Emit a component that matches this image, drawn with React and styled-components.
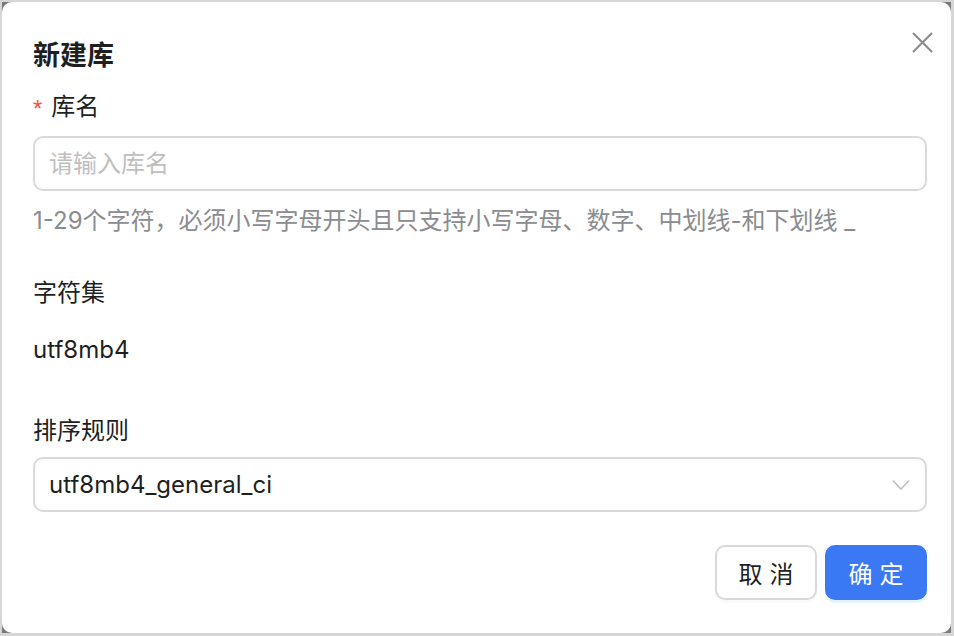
import React from "react";
import styled, { createGlobalStyle } from "styled-components";

const Global = createGlobalStyle`
  html, body { margin: 0; padding: 0; }
  body {
    font-family: Inter, "Noto Sans CJK SC", sans-serif;
    background: #d6d6d6;
  }
  * { box-sizing: border-box; }
`;

const Frame = styled.div`
  width: 954px;
  height: 636px;
  padding: 2px 3px 3px 2px;
  background: #d6d6d6;
`;

const Backdrop = styled.div`
  width: 100%;
  height: 100%;
  background: #7a7a7a;
`;

const Dialog = styled.div`
  position: relative;
  width: 100%;
  height: 100%;
  background: #ffffff;
  border-radius: 10px;
  padding: 37px 24px 33px 31px;
  display: flex;
  flex-direction: column;
`;

const Title = styled.div`
  font-size: 27px;
  line-height: 34px;
  font-weight: 700;
  color: #1f1f1f;
`;

const CloseButton = styled.button`
  position: absolute;
  top: 27px;
  right: 16px;
  width: 26px;
  height: 26px;
  padding: 0;
  border: none;
  background: transparent;
  display: flex;
  align-items: center;
  justify-content: center;
  cursor: pointer;
`;

const Label = styled.div`
  margin-top: ${(p) => p.$mt}px;
  font-size: 24px;
  line-height: 30px;
  color: #1f1f1f;
  display: flex;
  align-items: center;
`;

const Star = styled.span`
  color: #f5524a;
  font-size: 24px;
  margin-right: 9px;
  font-family: "Liberation Sans", sans-serif;
  position: relative;
  top: 2px;
`;

const Field = styled.div`
  margin-top: ${(p) => p.$mt}px;
  height: 55px;
  border: 2px solid #dadada;
  border-radius: 10px;
  padding: 0 14px;
  display: flex;
  align-items: center;
  justify-content: space-between;
  font-size: 24px;
  color: #1f1f1f;
`;

const Input = styled.input`
  flex: 1;
  border: none;
  outline: none;
  font: inherit;
  font-size: 24px;
  color: #1f1f1f;
  padding: 0;
  background: transparent;
  &::placeholder { color: #bfbfbf; }
`;

const Help = styled.div`
  margin-top: 15px;
  font-size: 24px;
  line-height: 30px;
  color: #8a8c90;
  white-space: nowrap;
`;

const Value = styled.div`
  margin-top: 27px;
  font-size: 24px;
  line-height: 30px;
  color: #1f1f1f;
`;

const Footer = styled.div`
  margin-top: 33px;
  display: flex;
  justify-content: flex-end;
  gap: 8px;
`;

const Button = styled.button`
  width: 102px;
  height: 55px;
  border-radius: 10px;
  font-family: "Noto Sans CJK SC", sans-serif;
  font-size: 24px;
  cursor: pointer;
  border: 2px solid ${(p) => (p.$primary ? "#3b79f4" : "#d9d9d9")};
  background: ${(p) => (p.$primary ? "#3b79f4" : "#ffffff")};
  color: ${(p) => (p.$primary ? "#ffffff" : "#1f1f1f")};
  box-shadow: 0 3px 0 ${(p) => (p.$primary ? "rgba(5,145,255,0.1)" : "rgba(0,0,0,0.02)")};
  letter-spacing: 7px;
  padding: 0 0 0 7px;
`;

export default function App() {
  return (
    <>
      <Global />
      <Frame>
        <Backdrop>
          <Dialog>
            <Title>新建库</Title>
            <CloseButton aria-label="close">
              <svg width="21" height="21" viewBox="0 0 21 21">
                <path d="M1 1 L20 20 M20 1 L1 20" stroke="#8a8a8a" strokeWidth="2" fill="none" />
              </svg>
            </CloseButton>
            <Label $mt={19}>
              <Star>*</Star>库名
            </Label>
            <Field $mt={14}>
              <Input placeholder="请输入库名" />
            </Field>
            <Help>1-29个字符，必须小写字母开头且只支持小写字母、数字、中划线-和下划线 _</Help>
            <Label $mt={42}>字符集</Label>
            <Value>utf8mb4</Value>
            <Label $mt={51}>排序规则</Label>
            <Field $mt={11}>
              <span>utf8mb4_general_ci</span>
              <svg width="20" height="12" viewBox="0 0 20 12">
                <path d="M2 1.5 L10 10 L18 1.5" stroke="#bfbfbf" strokeWidth="1.6" fill="none" />
              </svg>
            </Field>
            <Footer>
              <Button>取消</Button>
              <Button $primary>确定</Button>
            </Footer>
          </Dialog>
        </Backdrop>
      </Frame>
    </>
  );
}
